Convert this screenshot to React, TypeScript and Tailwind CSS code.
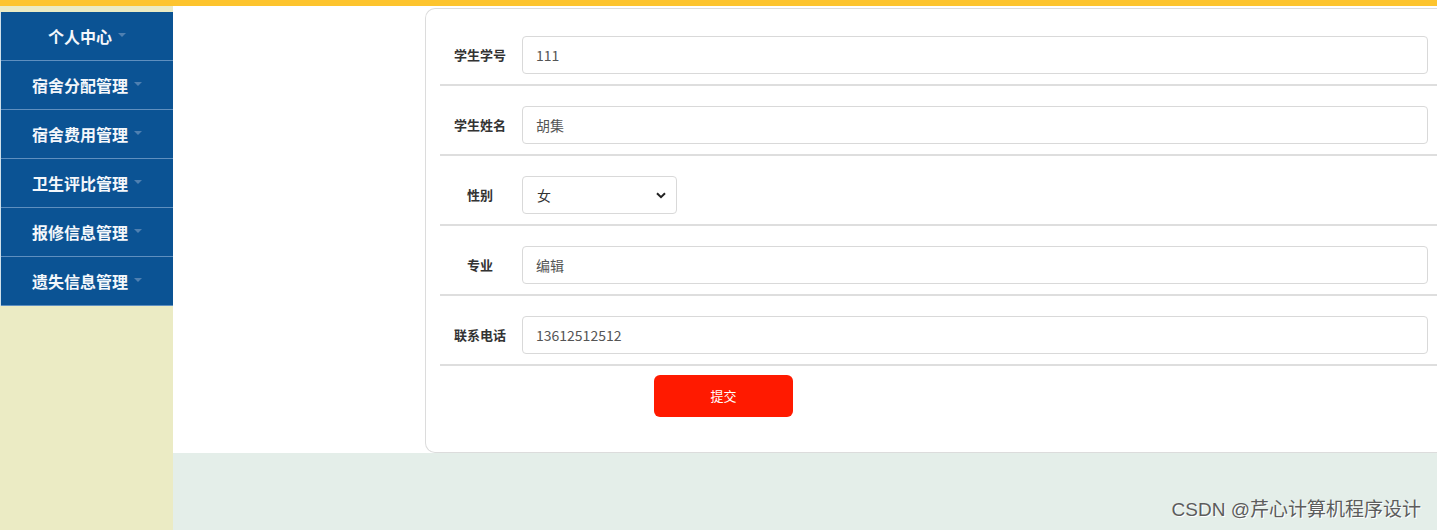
const FONT = '"Microsoft YaHei", "Noto Sans CJK SC", "Open Sans", sans-serif';

const MENU = ["个人中心", "宿舍分配管理", "宿舍费用管理", "卫生评比管理", "报修信息管理", "遗失信息管理"];

const FIELDS = [
  { label: "学生学号", value: "111" },
  { label: "学生姓名", value: "胡集" },
  { label: "性别", value: "女", select: true },
  { label: "专业", value: "编辑" },
  { label: "联系电话", value: "13612512512" },
];

export default function App() {
  return (
    <div className="flex h-[530px] w-[1437px] flex-col overflow-hidden bg-white" style={{ fontFamily: FONT }}>
      <div className="h-[6px] shrink-0 bg-[#fdc42e]" />
      <div className="flex min-h-0 flex-1">
        <aside className="flex w-[173px] shrink-0 flex-col bg-[#ebebc4] pt-[6px]">
          <div className="border-l border-[#cfe0ea] bg-[#0b5394]">
            {MENU.map((m) => (
              <div
                key={m}
                className="flex h-[49px] items-center justify-center border-b border-[#5f8fbf] text-[16px] font-semibold text-[#f4f7fb]"
              >
                <span>{m}</span>
                <span className="ml-[6px] mt-[-2px] inline-block h-0 w-0 border-x-[4px] border-t-[4px] border-x-transparent border-t-[#4f80b1]" />
              </div>
            ))}
          </div>
        </aside>
        <main className="flex min-w-0 flex-1 flex-col bg-[#e4eee9]">
          <div className="flex h-[447px] shrink-0 bg-white pl-[252px] pt-[2px]">
            <div className="flex flex-1 flex-col rounded-l-[10px] border border-r-0 border-[#dcdcdc] pl-[14px] pt-[27px]">
              {FIELDS.map((f) => (
                <div key={f.label} className="flex h-[70px] flex-col">
                  <div className="flex items-center">
                    <label className="w-[80px] text-center text-[13px] font-bold text-[#333]">{f.label}</label>
                    {f.select ? (
                      <div className="ml-[2px] flex h-[38px] w-[155px] items-center justify-between rounded-[4px] border border-[#d9d9d9] bg-white pl-[14px] pr-[10px] text-[14px] text-[#333]">
                        <span>{f.value}</span>
                        <svg width="10" height="7" viewBox="0 0 10 7">
                          <path d="M1 1.2 L5 5.2 L9 1.2" fill="none" stroke="#222" strokeWidth="2" />
                        </svg>
                      </div>
                    ) : (
                      <div className="ml-[2px] mr-[9px] flex h-[38px] flex-1 items-center rounded-[4px] border border-[#d9d9d9] bg-white pl-[13px] text-[14px] text-[#555]">
                        {f.value}
                      </div>
                    )}
                  </div>
                  <div className="mt-[10px] h-[2px] bg-[#dedede]" />
                </div>
              ))}
              <div className="mt-[-11px] flex pl-[214px]">
                <button className="h-[42px] w-[139px] rounded-[6px] bg-[#ff1a00] text-[13px] text-white">
                  提交
                </button>
              </div>
            </div>
          </div>
          <div className="flex flex-1 items-end justify-end pb-[6px] pr-[16px]">
            <span
              className="text-[19px] text-[#5c5c5c] [text-shadow:1px_1px_0_#fff]"
              style={{ fontFamily: '"Liberation Sans", "Noto Sans CJK SC", sans-serif' }}
            >
              CSDN @芹心计算机程序设计
            </span>
          </div>
        </main>
      </div>
    </div>
  );
}
